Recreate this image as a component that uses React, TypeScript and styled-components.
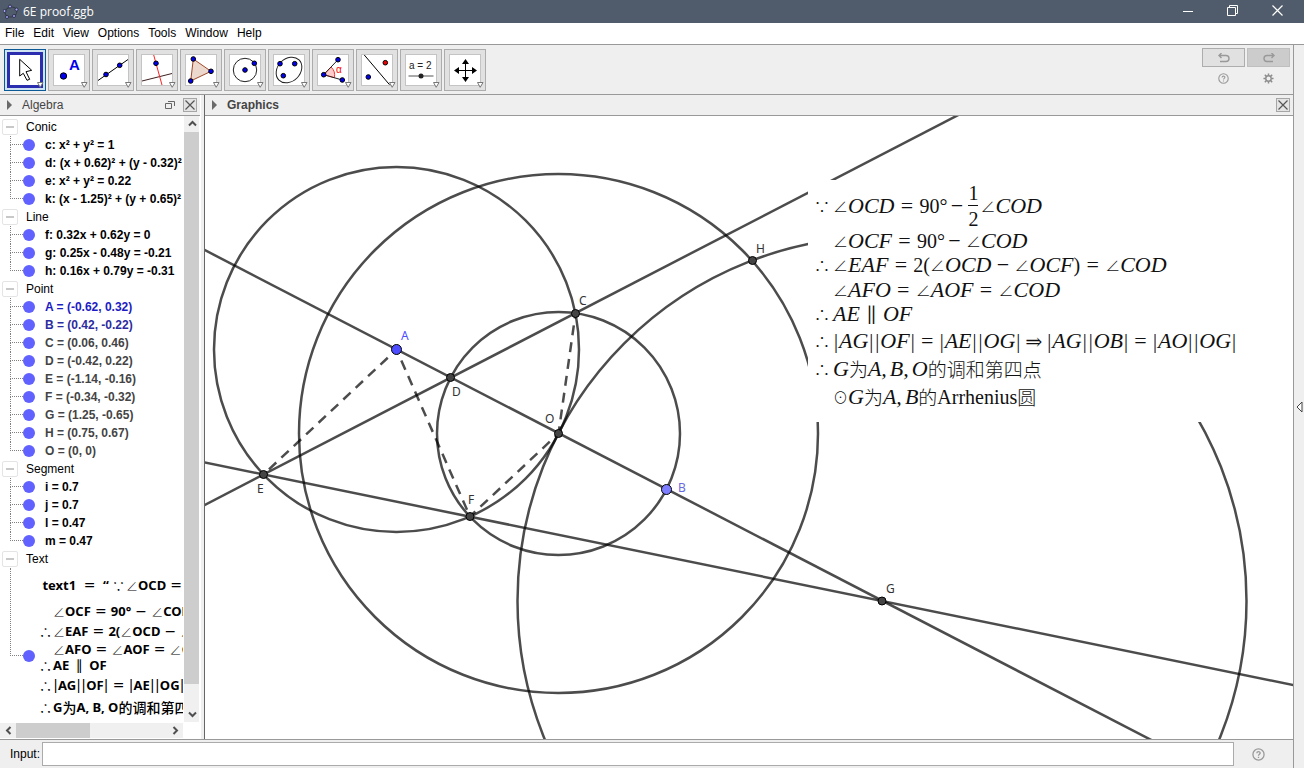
import React from "react";
import styled, { createGlobalStyle, css } from "styled-components";

const LINE = "#999999";
const PANEL = "#efefef";

const GlobalStyle = createGlobalStyle`
  * { box-sizing: border-box; }
  html, body, #root { height: 100%; }
  body {
    margin: 0;
    background: #ffffff;
    color: #000000;
    font: 12px/18px "Liberation Sans", Arial, sans-serif;
    overflow: hidden;
  }
  button { padding: 0; margin: 0; border: 0; background: none; font: inherit; color: inherit; }
  ul { list-style: none; margin: 0; padding: 0; }
  svg { display: block; }
`;

/* ---------- window frame ---------- */

const Window = styled.div`
  display: flex;
  flex-direction: column;
  height: 100vh;
`;

const TitleBar = styled.header`
  display: flex;
  align-items: center;
  flex: none;
  height: 23px;
  padding: 0 4px 0 3px;
  background: #505c6b;
  color: #ffffff;
`;

const Title = styled.h1`
  flex: 1;
  margin: 0 0 0 4px;
  font: 400 12px/22px "Open Sans", "Noto Sans", sans-serif;
`;

const WindowButton = styled.button`
  display: grid;
  place-items: center;
  align-self: flex-start;
  width: 45px;
  height: 21px;
`;

const MenuBar = styled.nav`
  display: flex;
  flex: none;
  gap: 9px;
  height: 21px;
  padding: 0 5px;
  background: #ffffff;
`;

const MenuItem = styled.button`
  height: 19px;
`;

const Body = styled.div`
  display: flex;
  flex: 1;
  min-height: 0;
  border-top: 1px solid ${LINE};
  background: ${PANEL};
`;

const Main = styled.div`
  display: flex;
  flex-direction: column;
  flex: 1;
  min-width: 0;
`;

const SideStrip = styled.button`
  display: grid;
  place-items: center;
  flex: none;
  width: 11px;
  border-left: 1px solid ${LINE};
  background: ${PANEL};
`;

/* ---------- toolbar ---------- */

const ToolBar = styled.div`
  display: flex;
  justify-content: space-between;
  flex: none;
  height: 49px;
  padding: 4px 3px 0 4px;
`;

const Tools = styled.div`
  display: flex;
  gap: 2px;
`;

const ToolButton = styled.button<{ $active?: boolean }>`
  width: 42px;
  height: 42px;
  padding: 4px;
  border: 1px solid ${(p) => (p.$active ? "#0b5a96" : "#acacac")};
  background: ${(p) => (p.$active ? "#cfe3f3" : "#e1e1e1")};
  ${(p) =>
    p.$active &&
    css`
      padding: 2px;
    `}
`;

const ToolFace = styled.span<{ $active?: boolean }>`
  display: grid;
  place-items: center;
  width: 100%;
  height: 100%;
  border: ${(p) => (p.$active ? "3px solid #2a2eae" : "1px solid #c4c4c4")};
  background: #ffffff;
`;

const ToolSvg = styled.svg`
  margin: -10px;
  overflow: visible;
`;

const Corner = styled.div`
  display: grid;
  grid-template-columns: 43px 43px;
  grid-template-rows: 19px 22px;
  gap: 0 2px;
  margin-top: -1px;
`;

const HistoryButton = styled.button<{ $off?: boolean }>`
  display: grid;
  place-items: center;
  border: 1px solid ${(p) => (p.$off ? "#bfbfbf" : "#adadad")};
  background: ${(p) => (p.$off ? "#cccccc" : "#e1e1e1")};
`;

const CornerIcon = styled.button`
  display: grid;
  place-items: center;
`;

/* ---------- docked views ---------- */

const Views = styled.div`
  display: flex;
  flex: 1;
  min-height: 0;
  border-top: 1px solid ${LINE};
`;

const AlgebraView = styled.section`
  display: flex;
  flex-direction: column;
  flex: none;
  width: 200px;
`;

const Splitter = styled.div`
  flex: none;
  width: 5px;
  border-left: 1px solid #ffffff;
  border-right: 1px solid #666666;
`;

const GraphicsView = styled.section`
  display: flex;
  flex-direction: column;
  flex: 1;
  min-width: 0;
`;

const ViewHeader = styled.div<{ $focused?: boolean }>`
  display: flex;
  align-items: center;
  flex: none;
  gap: 6px;
  height: 21px;
  padding: 0 3px 0 6px;
  border-bottom: 1px solid ${LINE};
  color: #444444;
  font-weight: ${(p) => (p.$focused ? 700 : 400)};
`;

const ViewTitle = styled.span`
  flex: 1;
  padding-left: 3px;
`;

const HeaderButton = styled.button<{ $boxed?: boolean }>`
  display: grid;
  place-items: center;
  width: 14px;
  height: 14px;
  border: ${(p) => (p.$boxed ? "1px solid #a6a6a6" : "0")};
  background: ${(p) => (p.$boxed ? "#e4e4e4" : "none")};
`;

const AlgebraBody = styled.div`
  display: grid;
  grid-template-columns: 1fr 16px;
  grid-template-rows: 1fr 17px;
  flex: 1;
  min-height: 0;
  background: #ffffff;
`;

const TreeViewport = styled.div`
  overflow: hidden;
  min-width: 0;
  margin-right: 1px;
  padding-top: 2px;
  white-space: nowrap;
`;

const ScrollBar = styled.div<{ $horizontal?: boolean }>`
  display: flex;
  flex-direction: ${(p) => (p.$horizontal ? "row" : "column")};
  background: #f0f0f0;
  ${(p) =>
    p.$horizontal
      ? css`
          margin: 1px 1px 1px 0;
        `
      : css`
          margin-right: 1px;
        `}
`;

const ScrollArrow = styled.button`
  display: grid;
  place-items: center;
  flex: none;
  width: 17px;
  height: 17px;
  margin: -1px;
  margin-left: 0;
`;

const ScrollTrack = styled.div<{ $horizontal?: boolean }>`
  display: flex;
  flex-direction: ${(p) => (p.$horizontal ? "row" : "column")};
  flex: 1;
  padding: ${(p) => (p.$horizontal ? "0" : "1px 0 0 0")};
`;

const ScrollThumb = styled.div<{ $share: string }>`
  flex: 0 0 ${(p) => p.$share};
  background: #cdcdcd;
`;

/* ---------- algebra tree ---------- */

const GroupHead = styled.div`
  display: flex;
  align-items: center;
  gap: 8px;
  height: 18px;
  padding-left: 2px;
`;

const Toggle = styled.button`
  display: grid;
  place-items: center;
  width: 16px;
  height: 16px;
  border: 1px solid #e4e4e4;
  border-radius: 2px;
  background: #ffffff;
`;

const Entry = styled.li`
  display: flex;
  align-items: center;
  padding-left: 10px;
  font-weight: 700;
`;

const Elbow = styled.span<{ $last?: boolean }>`
  display: grid;
  flex: none;
  grid-template-rows: 1fr 1fr;
  align-self: stretch;
  width: 13px;
  &::before,
  &::after {
    content: "";
    border-left: 1px dotted #808080;
  }
  &::before {
    border-bottom: 1px dotted #808080;
  }
  ${(p) =>
    p.$last &&
    css`
      &::after {
        border-left: 0;
      }
    `}
`;

const Marble = styled.button`
  flex: none;
  width: 12px;
  height: 12px;
  border-radius: 50%;
  background: #6161ff;
`;

const EntryText = styled.span<{ $color: string }>`
  padding-left: 10px;
  color: ${(p) => p.$color};
`;

const Formula = styled.div`
  padding-left: 4px;
  font: 700 13px "Noto Sans", "Noto Sans CJK SC", sans-serif;
`;

const FormulaLine = styled.div<{ $h: number; $indent?: boolean }>`
  display: flex;
  align-items: center;
  height: ${(p) => p.$h}px;
  padding-left: ${(p) => (p.$indent ? 14 : 0)}px;
  white-space: pre;
`;

const SmallSign = styled.span`
  width: 14px;
  font-family: "Noto Sans CJK SC", sans-serif;
  font-weight: 400;
`;

const SmallAngle = styled.span`
  font-family: "Noto Sans CJK SC", sans-serif;
  font-size: 12px;
  font-weight: 300;
`;

const SmallRel = styled.span`
  width: 20px;
  text-align: center;
  font-family: "DejaVu Sans", sans-serif;
  font-size: 14px;
  font-weight: 400;
`;

const SmallBar = styled.span`
  width: 5px;
  text-align: center;
  font-family: "Liberation Sans", sans-serif;
  font-size: 14px;
  font-weight: 400;
`;

const SmallHan = styled.span`
  font-family: "Noto Sans CJK SC", sans-serif;
  font-size: 14px;
  font-weight: 500;
`;

/* ---------- drawing pad ---------- */

const Canvas = styled.div`
  position: relative;
  flex: 1;
  min-height: 0;
  overflow: hidden;
  background: #ffffff;
`;

const Drawing = styled.svg`
  width: 100%;
  height: 100%;
`;

const ProofNote = styled.div`
  position: absolute;
  left: 603px;
  top: 64px;
  width: 432px;
  height: 242px;
  padding-left: 6px;
  background: #ffffff;
  color: #111111;
  white-space: nowrap;
  font-family: "Liberation Serif", "Noto Sans CJK SC", serif;
  font-size: 20px;
`;

const ProofLine = styled.div<{ $h: number }>`
  display: flex;
  align-items: center;
  height: ${(p) => p.$h}px;
  line-height: 20px;
`;

const Lead = styled.span`
  flex: none;
  width: 19px;
  font-family: "Noto Sans CJK SC", sans-serif;
  font-size: 16px;
  font-weight: 300;
`;

const Angle = styled.span`
  font-family: "Noto Sans CJK SC", sans-serif;
  font-size: 15px;
  font-weight: 300;
`;

const Rel = styled.span<{ $binary?: boolean }>`
  width: ${(p) => (p.$binary ? 23 : 25)}px;
  text-align: center;
  font-family: "Liberation Serif", "DejaVu Math TeX Gyre", serif;
  font-size: 22px;
`;

const Arrow = styled(Rel)`
  font-size: 18px;
`;

const Degree = styled.span`
  width: 6px;
`;

const Bar = styled.span`
  width: 6px;
  text-align: center;
`;

const Vars = styled.i`
  font-size: 22px;
`;

const Term = styled(Vars)`
  margin-right: 3px;
`;

const Han = styled.span`
  font-family: "Noto Sans CJK SC", sans-serif;
  font-size: 19px;
  font-weight: 300;
`;

const Fraction = styled.span`
  display: flex;
  flex-direction: column;
  width: 10px;
  margin-right: 2px;
  text-align: center;
`;

const Numerator = styled.span`
  height: 26px;
  line-height: 26px;
  border-bottom: 1px solid #111111;
`;

const Denominator = styled.span`
  height: 26px;
  line-height: 26px;
`;

/* ---------- input bar ---------- */

const InputBar = styled.form`
  display: flex;
  flex: none;
  height: 29px;
  padding: 2px 24px 2px 10px;
  border-top: 1px solid ${LINE};
  align-items: center;
`;

const InputLabel = styled.label`
  width: 32px;
`;

const InputField = styled.input`
  flex: 1;
  min-width: 0;
  height: 24px;
  margin-right: 14px;
  border: 1px solid #ababab;
  background: #ffffff;
  font: inherit;
  outline: 0;
`;

const HelpButton = styled.button`
  display: grid;
  place-items: center;
  width: 21px;
  height: 24px;
`;

/* ---------- icons ---------- */

const Dot = ({ x, y, r = 2.3, fill = "#0000ee" }: { x: number; y: number; r?: number; fill?: string }) => (
  <circle cx={x} cy={y} r={r} fill={fill} stroke="#000" strokeWidth="1" />
);

const HelpGlyph = ({ size }: { size: number }) => (
  <svg width={size} height={size} viewBox="0 0 14 14" fill="none" stroke="#9a9a9a" strokeWidth="1.4">
    <circle cx="7" cy="7" r="6" />
    <path d="M5.2 5.6C5.2 3.4 8.8 3.4 8.8 5.5C8.8 6.8 7 6.8 7 8.3M7 9.4V10.7" />
  </svg>
);

const Disclosure = () => (
  <svg width="7" height="10" viewBox="0 0 7 10">
    <path d="M1 0L6 5L1 10Z" fill="#6a6a6a" />
  </svg>
);

const CloseGlyph = () => (
  <svg width="12" height="12" viewBox="0 0 12 12" stroke="#555" strokeWidth="1.2">
    <path d="M1.5 1.5L10.5 10.5M10.5 1.5L1.5 10.5" />
  </svg>
);

const Chevron = ({ turn }: { turn: number }) => (
  <svg width="9" height="9" viewBox="0 0 9 9" fill="none" stroke="#505050" strokeWidth="2">
    <path d="M1 6.5L4.5 3L8 6.5" transform={`rotate(${turn} 4.5 4.5)`} />
  </svg>
);

const tools: { name: string; art: React.ReactNode }[] = [
  {
    name: "Move",
    art: <path d="M15.7 10.3V27L19.3 24.3L23 31.3L25.7 30.3L22 22.7L27.7 21.3Z" fill="#fff" stroke="#000" />,
  },
  {
    name: "Point",
    art: (
      <>
        <Dot x={15.5} y={27} r={3.2} />
        <text x="21" y="21" fill="#0000ee" fontSize="15" fontWeight="700">A</text>
      </>
    ),
  },
  {
    name: "Line",
    art: (
      <>
        <path d="M6 31.5L36 10.5" stroke="#000" />
        <Dot x={14} y={25.5} />
        <Dot x={27.7} y={16.3} />
      </>
    ),
  },
  {
    name: "Perpendicular Line",
    art: (
      <>
        <path d="M6 32L36 24.5" stroke="#402020" />
        <path d="M17.7 6L26 36" stroke="#ff2020" />
        <Dot x={20} y={14.3} />
      </>
    ),
  },
  {
    name: "Polygon",
    art: (
      <>
        <path d="M13.3 10L31 22.3L10.7 32Z" fill="#ecd8cc" stroke="#a0482a" />
        <Dot x={13.3} y={10} />
        <Dot x={31} y={22.3} />
        <Dot x={10.7} y={32} />
      </>
    ),
  },
  {
    name: "Circle with Center through Point",
    art: (
      <>
        <circle cx="21" cy="21" r="11.7" fill="none" stroke="#222" />
        <Dot x={21} y={21} />
        <Dot x={30.3} y={14.3} />
      </>
    ),
  },
  {
    name: "Ellipse",
    art: (
      <>
        <ellipse cx="21" cy="21" rx="14.2" ry="11.3" transform="rotate(-45 21 21)" fill="none" stroke="#222" />
        <Dot x={12} y={14.7} />
        <Dot x={26.7} y={14.7} />
        <Dot x={15.3} y={26.7} />
      </>
    ),
  },
  {
    name: "Angle",
    art: (
      <>
        <path d="M11.7 25.7L19 18A11 11 0 0 1 22.3 28.7Z" fill="#fcc" stroke="#f33" />
        <path d="M26 10.7L11.7 25.7L30.3 31" fill="none" stroke="#222" />
        <Dot x={26} y={10.7} />
        <Dot x={11.7} y={25.7} />
        <Dot x={30.3} y={31} />
        <text x="24" y="24" fill="#f00" fontSize="10">α</text>
      </>
    ),
  },
  {
    name: "Reflect about Line",
    art: (
      <>
        <path d="M8.3 6L33.5 35.7" stroke="#000" />
        <Dot x={29.3} y={13.7} fill="#ee0000" />
        <Dot x={12.3} y={28} />
      </>
    ),
  },
  {
    name: "Slider",
    art: (
      <>
        <text x="9" y="20" fill="#222" fontSize="10">a = 2</text>
        <path d="M8.5 27H33.5" stroke="#555" />
        <circle cx="21" cy="27" r="2.5" fill="#222" />
      </>
    ),
  },
  {
    name: "Move Graphics View",
    art: (
      <>
        <path d="M12 21.5H31M21.5 12V31" stroke="#000" />
        <path d="M21.5 10L25 15H18ZM21.5 33L25 28H18ZM10 21.5L15 18V25ZM33 21.5L28 18V25Z" fill="#000" />
      </>
    ),
  },
];

const ToolIcon = ({ art }: { art: React.ReactNode }) => (
  <ToolSvg width="42" height="42" viewBox="0 0 42 42" fontFamily="Liberation Sans">
    {art}
    <path d="M33.5 33.5H39L36.2 38.3Z" fill="#fff" stroke="#777" />
  </ToolSvg>
);

/* ---------- data ---------- */

const menus = ["File", "Edit", "View", "Options", "Tools", "Window", "Help"];

const FREE = "#1c1cc4";
const DEPENDENT = "#444444";

const groups: { name: string; entries: { text: string; color?: string }[] }[] = [
  {
    name: "Conic",
    entries: [
      { text: "c: x² + y² = 1" },
      { text: "d: (x + 0.62)² + (y - 0.32)² = 0.49" },
      { text: "e: x² + y² = 0.22" },
      { text: "k: (x - 1.25)² + (y + 0.65)² = 1.98" },
    ],
  },
  {
    name: "Line",
    entries: [{ text: "f: 0.32x + 0.62y = 0" }, { text: "g: 0.25x - 0.48y = -0.21" }, { text: "h: 0.16x + 0.79y = -0.31" }],
  },
  {
    name: "Point",
    entries: [
      { text: "A = (-0.62, 0.32)", color: FREE },
      { text: "B = (0.42, -0.22)", color: "#2c2ca0" },
      { text: "C = (0.06, 0.46)", color: DEPENDENT },
      { text: "D = (-0.42, 0.22)", color: DEPENDENT },
      { text: "E = (-1.14, -0.16)", color: DEPENDENT },
      { text: "F = (-0.34, -0.32)", color: DEPENDENT },
      { text: "G = (1.25, -0.65)", color: DEPENDENT },
      { text: "H = (0.75, 0.67)", color: DEPENDENT },
      { text: "O = (0, 0)", color: DEPENDENT },
    ],
  },
  { name: "Segment", entries: [{ text: "i = 0.7" }, { text: "j = 0.7" }, { text: "l = 0.47" }, { text: "m = 0.47" }] },
];

type Pt = { name: string; x: number; y: number; lx: number; ly: number; fill?: string; ink?: string; r?: number };

const points: Pt[] = [
  { name: "A", x: 396.5, y: 349.5, lx: 401, ly: 340, fill: "#4d4dff", ink: "#4d4dff", r: 5 },
  { name: "B", x: 666.5, y: 489.5, lx: 678, ly: 492, fill: "#7d7dff", ink: "#6a6ae0", r: 5 },
  { name: "C", x: 575.5, y: 313.5, lx: 579, ly: 305 },
  { name: "D", x: 450.5, y: 377.5, lx: 452, ly: 396 },
  { name: "E", x: 263.5, y: 474.5, lx: 257, ly: 493 },
  { name: "F", x: 470, y: 516.5, lx: 468, ly: 504 },
  { name: "G", x: 882, y: 601, lx: 886, ly: 593 },
  { name: "H", x: 752.5, y: 260.5, lx: 756, ly: 253 },
  { name: "O", x: 558.5, y: 433.5, lx: 545, ly: 423 },
];

const circles = [
  [396.5, 349.5, 182.5],
  [558.5, 433.5, 121.5],
  [558.5, 433.5, 259.5],
  [882, 601, 364.5],
];

const lines = [
  [195, 245, 1159, 744],
  [195, 510, 966, 111],
  [195, 460.5, 1303, 687],
];

const dashes = [
  [396.5, 349.5, 263.5, 474.5],
  [396.5, 349.5, 470, 516.5],
  [558.5, 433.5, 470, 516.5],
  [575.5, 313.5, 558.5, 433.5],
];

/* ---------- parts ---------- */

const TreeGroup = ({ name, children }: { name: string; children: React.ReactNode }) => (
  <li>
    <GroupHead>
      <Toggle aria-label={`Collapse ${name}`}>
        <svg width="8" height="2"><rect width="8" height="2" fill="#c8c8c8" /></svg>
      </Toggle>
      {name}
    </GroupHead>
    <ul>{children}</ul>
  </li>
);

/* Turns a compact formula string into spans: relations, bars, angles, signs and Han runs. */
const SmallMath = ({ src }: { src: string }) => (
  <>
    {src.split(/([=−∥]|\||∠|[∵∴]|[\u4e00-\u9fff]+)/).map((part, i) => {
      if (!part) return null;
      if (/^[=−∥]$/.test(part)) return <SmallRel key={i}>{part}</SmallRel>;
      if (part === "|") return <SmallBar key={i}>|</SmallBar>;
      if (part === "∠") return <SmallAngle key={i}>∠</SmallAngle>;
      if (/^[∵∴]$/.test(part)) return <SmallSign key={i}>{part}</SmallSign>;
      if (/^[\u4e00-\u9fff]/.test(part)) return <SmallHan key={i}>{part}</SmallHan>;
      return <span key={i}>{part}</span>;
    })}
  </>
);

const formulaLines: { src: string; h: number; indent?: boolean }[] = [
  { src: " text1 = “ ∵∠OCD=90°", h: 34 },
  { src: "∠OCF=90°−∠COD", h: 18, indent: true },
  { src: "∴∠EAF=2(∠OCD−∠OCF)", h: 22 },
  { src: "∠AFO=∠AOF=∠COD", h: 14, indent: true },
  { src: "∴AE∥OF", h: 18 },
  { src: "∴|AG||OF|=|AE||OG|", h: 22 },
  { src: "∴G为A, B, O的调和第四点", h: 22 },
  { src: "⊙G为A, B的Arrhenius圆", h: 26, indent: true },
];

const TextEntry = () => (
  <Entry>
    <Elbow $last />
    <Marble aria-label="Show text1" />
    <Formula>
      {formulaLines.map((l) => (
        <FormulaLine key={l.src} $h={l.h} $indent={l.indent}><SmallMath src={l.src} /></FormulaLine>
      ))}
    </Formula>
  </Entry>
);

/* Absolute value: the name of a length between two bars. */
const Abs = ({ of }: { of: string }) => (
  <><Bar>|</Bar><Vars>{of}</Vars><Bar>|</Bar></>
);

const Ang = ({ of }: { of: string }) => (
  <><Angle>∠</Angle><Vars>{of}</Vars></>
);

const Proof = () => (
  <ProofNote>
    <ProofLine $h={52}>
      <Lead>∵</Lead><Ang of="OCD" /><Rel>=</Rel>90<Degree>°</Degree><Rel $binary>−</Rel>
      <Fraction><Numerator>1</Numerator><Denominator>2</Denominator></Fraction>
      <Ang of="COD" />
    </ProofLine>
    <ProofLine $h={18}>
      <Lead /><Ang of="OCF" /><Rel>=</Rel>90<Degree>°</Degree><Rel $binary>−</Rel><Ang of="COD" />
    </ProofLine>
    <ProofLine $h={30}>
      <Lead>∴</Lead><Ang of="EAF" /><Rel>=</Rel>2(<Ang of="OCD" /><Rel $binary>−</Rel>
      <Ang of="OCF" />)<Rel>=</Rel><Ang of="COD" />
    </ProofLine>
    <ProofLine $h={20}>
      <Lead /><Ang of="AFO" /><Rel>=</Rel><Ang of="AOF" /><Rel>=</Rel><Ang of="COD" />
    </ProofLine>
    <ProofLine $h={28}>
      <Lead>∴</Lead><Vars>AE</Vars><Rel $binary>∥</Rel><Vars>OF</Vars>
    </ProofLine>
    <ProofLine $h={26}>
      <Lead>∴</Lead><Abs of="AG" /><Abs of="OF" /><Rel $binary>=</Rel><Abs of="AE" /><Abs of="OG" /><Arrow>⇒</Arrow>
      <Abs of="AG" /><Abs of="OB" /><Rel $binary>=</Rel><Abs of="AO" /><Abs of="OG" />
    </ProofLine>
    <ProofLine $h={30}>
      <Lead>∴</Lead><Vars>G</Vars><Han>为</Han><Term>A,</Term><Term>B,</Term><Vars>O</Vars><Han>的调和第四点</Han>
    </ProofLine>
    <ProofLine $h={26}>
      <Lead /><Angle>⊙</Angle><Vars>G</Vars><Han>为</Han><Term>A,</Term><Vars>B</Vars><Han>的</Han>Arrhenius<Han>圆</Han>
    </ProofLine>
  </ProofNote>
);

export default function App() {
  return (
    <Window>
      <GlobalStyle />
      <TitleBar>
        <svg width="16" height="16" viewBox="0 0 16 16">
          <ellipse cx="8" cy="8" rx="6" ry="5" fill="none" stroke="#353d49" transform="rotate(-15 8 8)" />
          {[[7, 2.5], [13.5, 5.5], [11, 12], [4, 13], [1.5, 7]].map(([x, y]) => (
            <circle key={x} cx={x} cy={y} r="1.5" fill="#a6a6f6" stroke="#22223c" strokeWidth="0.8" />
          ))}
        </svg>
        <Title>6E proof.ggb</Title>
        <WindowButton aria-label="Minimize">
          <svg width="10" height="10"><path d="M0 5.5H10" stroke="#fff" /></svg>
        </WindowButton>
        <WindowButton aria-label="Restore">
          <svg width="11" height="11" fill="none" stroke="#fff"><path d="M0.5 2.5H8.5V10.5H0.5ZM2.5 2.5V0.5H10.5V8.5H8.5" /></svg>
        </WindowButton>
        <WindowButton aria-label="Close">
          <svg width="11" height="11" stroke="#fff" strokeWidth="1.2"><path d="M0.5 0.5L10.5 10.5M10.5 0.5L0.5 10.5" /></svg>
        </WindowButton>
      </TitleBar>
      <MenuBar>
        {menus.map((m) => <MenuItem key={m}>{m}</MenuItem>)}
      </MenuBar>
      <Body>
        <Main>
          <ToolBar>
            <Tools>
              {tools.map((t, i) => (
                <ToolButton key={t.name} aria-label={t.name} $active={i === 0}>
                  <ToolFace $active={i === 0}><ToolIcon art={t.art} /></ToolFace>
                </ToolButton>
              ))}
            </Tools>
            <Corner>
              <HistoryButton aria-label="Undo">
                <svg width="12" height="10" viewBox="0 0 12 10" fill="none" stroke="#999" strokeWidth="1.4">
                  <path d="M1 2.5H8A2.8 2.8 0 0 1 8 8.5H2M3.5 0L1 2.5L3.5 5" />
                </svg>
              </HistoryButton>
              <HistoryButton aria-label="Redo" $off>
                <svg width="12" height="10" viewBox="0 0 12 10" fill="none" stroke="#999" strokeWidth="1.4">
                  <path d="M11 2.5H4A2.8 2.8 0 0 0 4 8.5H10M8.5 0L11 2.5L8.5 5" />
                </svg>
              </HistoryButton>
              <CornerIcon aria-label="Help"><HelpGlyph size={11} /></CornerIcon>
              <CornerIcon aria-label="Preferences">
                <svg width="11" height="11" viewBox="0 0 12 12" fill="none" stroke="#8c8c8c">
                  <circle cx="6" cy="6" r="3" strokeWidth="1.6" />
                  <path d="M6 0.5V2.5M6 9.5V11.5M0.5 6H2.5M9.5 6H11.5M2 2L3.5 3.5M8.5 8.5L10 10M10 2L8.5 3.5M3.5 8.5L2 10" strokeWidth="1.6" />
                </svg>
              </CornerIcon>
            </Corner>
          </ToolBar>
          <Views>
            <AlgebraView>
              <ViewHeader>
                <Disclosure />
                <ViewTitle>Algebra</ViewTitle>
                <HeaderButton aria-label="Open in new window">
                  <svg width="10" height="8" fill="none" stroke="#666"><path d="M0.5 2.5H6.5V7.5H0.5ZM3 0.5H9.5V5" /></svg>
                </HeaderButton>
                <HeaderButton $boxed aria-label="Close Algebra"><CloseGlyph /></HeaderButton>
              </ViewHeader>
              <AlgebraBody>
                <TreeViewport>
                  <ul>
                    {groups.map((g) => (
                      <TreeGroup key={g.name} name={g.name}>
                        {g.entries.map((e, i) => (
                          <Entry key={e.text}>
                            <Elbow $last={i === g.entries.length - 1} />
                            <Marble aria-label={`Show ${e.text}`} />
                            <EntryText $color={e.color ?? "#000000"}>{e.text}</EntryText>
                          </Entry>
                        ))}
                      </TreeGroup>
                    ))}
                    <TreeGroup name="Text"><TextEntry /></TreeGroup>
                  </ul>
                </TreeViewport>
                <ScrollBar>
                  <ScrollArrow aria-label="Scroll up"><Chevron turn={0} /></ScrollArrow>
                  <ScrollTrack><ScrollThumb $share="96%" /></ScrollTrack>
                  <ScrollArrow aria-label="Scroll down"><Chevron turn={180} /></ScrollArrow>
                </ScrollBar>
                <ScrollBar $horizontal>
                  <ScrollArrow aria-label="Scroll left"><Chevron turn={-90} /></ScrollArrow>
                  <ScrollTrack $horizontal><ScrollThumb $share="49%" /></ScrollTrack>
                  <ScrollArrow aria-label="Scroll right"><Chevron turn={90} /></ScrollArrow>
                </ScrollBar>
              </AlgebraBody>
            </AlgebraView>
            <Splitter />
            <GraphicsView>
              <ViewHeader $focused>
                <Disclosure />
                <ViewTitle>Graphics</ViewTitle>
                <HeaderButton $boxed aria-label="Close Graphics"><CloseGlyph /></HeaderButton>
              </ViewHeader>
              <Canvas>
                <Drawing>
                  <g transform="translate(-205 -116)">
                    <g fill="none" stroke="#000" strokeOpacity="0.7" strokeWidth="2.5">
                      {circles.map(([x, y, r]) => <circle key={`${x}-${r}`} cx={x} cy={y} r={r} />)}
                      {lines.map(([a, b, c, d]) => <line key={b} x1={a} y1={b} x2={c} y2={d} />)}
                      {dashes.map(([a, b, c, d]) => (
                        <line key={`${a}-${c}`} x1={a} y1={b} x2={c} y2={d} strokeDasharray="10 7" strokeDashoffset="5" />
                      ))}
                    </g>
                    {points.map((p) => (
                      <g key={p.name}>
                        <circle cx={p.x} cy={p.y} r={p.r ?? 4} fill={p.fill ?? "#444"} stroke="#000" />
                        <text x={p.lx} y={p.ly} fill={p.ink ?? "#333"} fontSize="12" fontFamily="Noto Sans, sans-serif">{p.name}</text>
                      </g>
                    ))}
                  </g>
                </Drawing>
                <Proof />
              </Canvas>
            </GraphicsView>
          </Views>
          <InputBar onSubmit={(e) => e.preventDefault()}>
            <InputLabel htmlFor="command">Input:</InputLabel>
            <InputField id="command" type="text" autoComplete="off" />
            <HelpButton type="button" aria-label="Input help"><HelpGlyph size={13} /></HelpButton>
          </InputBar>
        </Main>
        <SideStrip aria-label="Show sidebar">
          <svg width="7" height="12" viewBox="0 0 7 12"><path d="M6 1L1 6L6 11Z" fill="#fff" stroke="#444" /></svg>
        </SideStrip>
      </Body>
    </Window>
  );
}
